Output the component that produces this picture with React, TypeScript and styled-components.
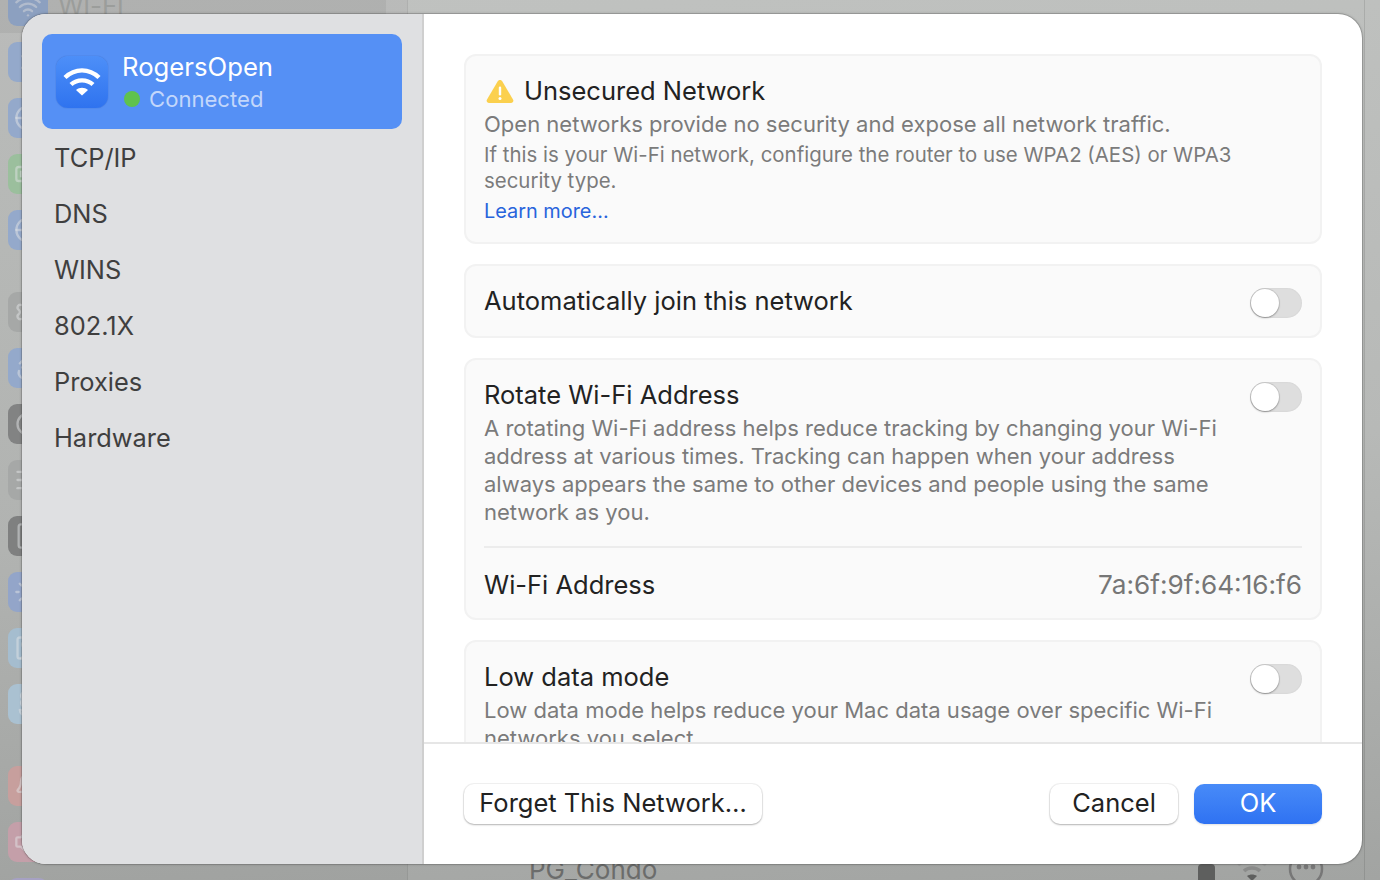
import React from "react";
import styled, { createGlobalStyle } from "styled-components";
import {
  Wifi, Bluetooth, Globe, BatteryFull, Settings, Accessibility, Moon, SlidersHorizontal,
  Tablet, Sun, Image, Flower2, Bell, Volume2, Hand,
} from "lucide-react";

const Global = createGlobalStyle`
  html, body { margin: 0; padding: 0; width: 1380px; height: 880px; overflow: hidden; }
  body { font-family: Inter, "Liberation Sans", sans-serif; -webkit-font-smoothing: antialiased; }
  * { box-sizing: border-box; }
`;

const Page = styled.div`
  position: relative;
  width: 1380px;
  height: 880px;
  overflow: hidden;
  display: grid;
  grid-template-columns: 408px 957px 15px;
  background: linear-gradient(175deg, #c0c2c0 0%, #b7b9b7 55%, #a2a4a2 100%);
`;

const Rail = styled.aside`
  display: flex;
  flex-direction: column;
  gap: 16px;
  padding-left: 8px;
  margin-top: -14px;
  height: 900px;
  border-right: 1px solid rgba(0, 0, 0, 0.06);
  background: rgba(0, 0, 0, 0.03);
`;

const RailIcon = styled.div<{ $bg: string; $gapBefore?: boolean }>`
  flex: none;
  width: 40px;
  height: 40px;
  border-radius: 9px;
  background: ${(p) => p.$bg};
  color: rgba(225, 228, 230, 0.5);
  display: flex;
  align-items: center;
  justify-content: center;
  margin-top: ${(p) => (p.$gapBefore ? "26px" : "0")};
`;

const BackMain = styled.main`
  display: flex;
  flex-direction: column;
  justify-content: flex-end;
  border-right: 1px solid rgba(0, 0, 0, 0.1);
`;

const BackRow = styled.div`
  display: flex;
  align-items: center;
  height: 40px;
  margin-bottom: -3px;
  padding-left: 121px;
  color: #6b6c6b;
  font-size: 26px;
`;

const BackName = styled.span`
  flex: 1;
`;

const BackIcons = styled.div`
  display: flex;
  align-items: center;
  width: 128px;
  margin-right: 38px;
`;

const BackWifiRow = styled.div`
  position: absolute;
  left: 0;
  top: -20px;
  width: 386px;
  height: 53px;
  border-radius: 0 10px 10px 0;
  background: rgba(0, 0, 0, 0.05);
  padding: 10px 0 0 58px;
  font-size: 26px;
  line-height: 32px;
  color: #9b9d9b;
`;

const Dialog = styled.div`
  position: absolute;
  left: 22px;
  top: 14px;
  width: 1340px;
  height: 850px;
  border-radius: 24px;
  overflow: hidden;
  display: grid;
  grid-template-columns: 402px 1fr;
  background: #fff;
  box-shadow: 0 0 0 1px rgba(70, 70, 70, 0.2), 0 0 3px rgba(0, 0, 0, 0.3);
`;

const Side = styled.nav`
  background: #dfe0e2;
  border-right: 2px solid #cfcfcf;
  padding: 20px 20px 0;
  display: flex;
  flex-direction: column;
`;

const Selected = styled.div`
  height: 95px;
  border-radius: 10px;
  background: #5590f5;
  display: flex;
  align-items: center;
  gap: 14px;
  padding-left: 14px;
  margin-bottom: 1px;
`;

const WifiTile = styled.div`
  width: 52px;
  height: 52px;
  border-radius: 12px;
  background: linear-gradient(180deg, #4d8ff8 0%, #2f73ef 100%);
  box-shadow: 0 0 1px rgba(20, 50, 120, 0.5);
  display: flex;
`;

const SelText = styled.div`
  display: flex;
  flex-direction: column;
  margin-top: 1px;
`;

const SelName = styled.div`
  color: #fff;
  font-size: 25.7px;
  line-height: 32px;
  margin-bottom: 1px;
`;

const SelStatus = styled.div`
  display: flex;
  align-items: center;
  gap: 9px;
  color: #c3d7fb;
  font-size: 22.1px;
  line-height: 30px;
  margin-left: 2px;
`;

const Dot = styled.span`
  width: 16px;
  height: 16px;
  border-radius: 50%;
  background: #5fc24e;
`;

const SideItem = styled.div`
  height: 56px;
  line-height: 56px;
  padding-left: 12px;
  color: #3f3f3f;
  font-size: 25.4px;
`;

const Right = styled.section`
  display: flex;
  flex-direction: column;
  min-height: 0;
`;

const Scroll = styled.div`
  height: 730px;
  overflow: hidden;
  padding: 40px 40px 0;
  display: flex;
  flex-direction: column;
  gap: 20px;
  border-bottom: 2px solid #e6e6e6;
`;

const Card = styled.div<{ $h: number; $flat?: boolean }>`
  flex: none;
  height: ${(p) => p.$h}px;
  background: #fafafa;
  border: 2px solid #f2f2f2;
  border-radius: 12px;
  padding: ${(p) => (p.$flat ? "0 18px" : "17px 18px 0")};
`;

const WarnHead = styled.div`
  display: flex;
  align-items: center;
  gap: 10px;
  height: 36px;
  margin-bottom: 1px;
  padding-left: 2px;
`;

const Title = styled.div`
  color: #222;
  font-size: 25.5px;
  line-height: 36px;
`;

const RowTitle = styled(Title)`
  margin-bottom: 1px;
`;

const Desc = styled.div`
  color: #7b7b7b;
  font-size: 22.03px;
  line-height: 28px;
`;

const Small = styled.div`
  color: #7b7b7b;
  font-size: 20.42px;
  line-height: 26px;
  margin-top: 4px;
`;

const Link = styled.div`
  color: #2864dc;
  font-size: 19.9px;
  line-height: 26px;
  margin-top: 4px;
`;

const Row = styled.div<{ $h?: number }>`
  display: flex;
  justify-content: space-between;
  align-items: ${(p) => (p.$h ? "center" : "flex-start")};
  ${(p) => (p.$h ? `height: ${p.$h}px;` : "")}
`;

const RowText = styled.div`
  width: 746px;
`;

const Toggle = styled.div<{ $top?: number }>`
  flex: none;
  width: 52px;
  height: 30px;
  border-radius: 15px;
  background: #dedede;
  box-shadow: inset 0 0 2px rgba(0, 0, 0, 0.08);
  margin-top: ${(p) => p.$top ?? 0}px;
  padding: 1px;
`;

const Knob = styled.div`
  width: 28px;
  height: 28px;
  border-radius: 50%;
  background: #fff;
  box-shadow: 0 0 0 1px rgba(0, 0, 0, 0.08), 0 1px 2px rgba(0, 0, 0, 0.3);
`;

const Divider = styled.div`
  height: 2px;
  background: #ececec;
  margin-top: 20px;
`;

const AddressRow = styled.div`
  display: flex;
  justify-content: space-between;
  align-items: center;
  height: 74px;
`;

const AddressValue = styled.span`
  color: #767676;
  font-size: 26.2px;
  margin-top: -1px;
`;

const Footer = styled.footer`
  flex: 1;
  display: flex;
  align-items: flex-start;
  padding: 40px 40px 0;
  gap: 16px;
`;

const Button = styled.button<{ $w: number; $primary?: boolean }>`
  width: ${(p) => p.$w}px;
  height: 40px;
  border: none;
  padding: 0 0 2px;
  border-radius: 10px;
  font-family: inherit;
  font-size: 25.5px;
  line-height: 38px;
  color: ${(p) => (p.$primary ? "#fff" : "#222")};
  background: ${(p) => (p.$primary ? "linear-gradient(180deg, #488bf8 0%, #2f72f2 100%)" : "#fff")};
  box-shadow: ${(p) =>
    p.$primary
      ? "0 1px 2px rgba(0,0,0,.12)"
      : "0 0 0 1px rgba(0,0,0,.05), 0 1px 2px rgba(0,0,0,.26)"};
`;

const Spacer = styled.div`
  flex: 1;
`;

const railIcons: { I: React.ElementType; bg: string; gap?: boolean }[] = [
  { I: Wifi, bg: "#94a9cb" },
  { I: Bluetooth, bg: "#94a9cb" },
  { I: Globe, bg: "#94a9cb" },
  { I: BatteryFull, bg: "#9bbf9d" },
  { I: Globe, bg: "#94a9cb" },
  { I: Settings, bg: "#a6a8a7", gap: true },
  { I: Accessibility, bg: "#94a9cb" },
  { I: Moon, bg: "#828383" },
  { I: SlidersHorizontal, bg: "#a6a8a7" },
  { I: Tablet, bg: "#7f8080" },
  { I: Sun, bg: "#93a5c9" },
  { I: Image, bg: "#a5bdcf" },
  { I: Flower2, bg: "#aac1d1" },
  { I: Bell, bg: "#c79f9d", gap: true },
  { I: Volume2, bg: "#c49fa9" },
  { I: Hand, bg: "#a6a1c3" },
];

const WifiGlyph = () => (
  <svg width="52" height="52" viewBox="0 0 52 52" fill="none">
    <path d="M9 21.5C19 12 33 12 43 21.5" stroke="#fff" strokeWidth="4.4" />
    <path d="M15 28.5C21 23 31 23 37 28.5" stroke="#fff" strokeWidth="4.4" />
    <path d="M20 34C23.5 31 28.5 31 32 34L26 39.5Z" fill="#fff" />
  </svg>
);

const WarnIcon = () => (
  <svg width="28" height="24" viewBox="0 0 28 24">
    <path
      d="M14 1C15 1 15.8 1.5 16.4 2.5L27 20.5C28 22.2 26.9 24 25 24H3C1.1 24 0 22.2 1 20.5L11.6 2.5C12.2 1.5 13 1 14 1Z"
      fill="#fbd04e"
    />
    <rect x="12.8" y="7.5" width="2.4" height="9" rx="1.2" fill="#fff" />
    <circle cx="14" cy="19.5" r="1.5" fill="#fff" />
  </svg>
);

const BackStatusIcons = () => (
  <svg width="128" height="44" viewBox="0 0 128 44" fill="none">
    <rect x="0" y="17" width="17" height="24" rx="4" fill="#5e5f5e" />
    <path d="M40 18C48 11 60 11 68 18" stroke="#999a99" strokeWidth="3.5" />
    <path d="M46 24C50 20 58 20 62 24" stroke="#8a8b8a" strokeWidth="3.5" />
    <path d="M49 29C52 27 56 27 59 29L54 34Z" fill="#5e5f5e" />
    <circle cx="108" cy="22" r="16" stroke="#777" strokeWidth="2.5" />
    <circle cx="101" cy="20" r="2.4" fill="#777" />
    <circle cx="108" cy="20" r="2.4" fill="#777" />
    <circle cx="115" cy="20" r="2.4" fill="#777" />
  </svg>
);

const App = () => (
  <Page>
    <Global />
    <BackWifiRow>Wi-Fi</BackWifiRow>
    <Rail>
      {railIcons.map(({ I, bg, gap }, i) => (
        <RailIcon key={i} $bg={bg} $gapBefore={gap}>
          <I size={28} strokeWidth={2} />
        </RailIcon>
      ))}
    </Rail>
    <BackMain>
      <BackRow>
        <BackName>PG_Condo</BackName>
        <BackIcons>
          <BackStatusIcons />
        </BackIcons>
      </BackRow>
    </BackMain>
    <div />
    <Dialog>
      <Side>
        <Selected>
          <WifiTile>
            <WifiGlyph />
          </WifiTile>
          <SelText>
            <SelName>RogersOpen</SelName>
            <SelStatus>
              <Dot />
              Connected
            </SelStatus>
          </SelText>
        </Selected>
        {["TCP/IP", "DNS", "WINS", "802.1X", "Proxies", "Hardware"].map((t) => (
          <SideItem key={t}>{t}</SideItem>
        ))}
      </Side>
      <Right>
        <Scroll>
          <Card $h={190}>
            <WarnHead>
              <WarnIcon />
              <Title>Unsecured Network</Title>
            </WarnHead>
            <Desc>Open networks provide no security and expose all network traffic.</Desc>
            <Small>If this is your Wi-Fi network, configure the router to use WPA2 (AES) or WPA3 security type.</Small>
            <Link>Learn more…</Link>
          </Card>
          <Card $h={74} $flat>
            <Row $h={70}>
              <Title>Automatically join this network</Title>
              <Toggle $top={4}>
                <Knob />
              </Toggle>
            </Row>
          </Card>
          <Card $h={262}>
            <Row>
              <RowText>
                <RowTitle>Rotate Wi-Fi Address</RowTitle>
                <Desc>
                  A rotating Wi-Fi address helps reduce tracking by changing your Wi-Fi address at various times. Tracking can happen when your address always appears the same to other devices and people using the same network as you.
                </Desc>
              </RowText>
              <Toggle $top={5}>
                <Knob />
              </Toggle>
            </Row>
            <Divider />
            <AddressRow>
              <Title>Wi-Fi Address</Title>
              <AddressValue>7a:6f:9f:64:16:f6</AddressValue>
            </AddressRow>
          </Card>
          <Card $h={180}>
            <Row>
              <RowText>
                <RowTitle>Low data mode</RowTitle>
                <Desc>Low data mode helps reduce your Mac data usage over specific Wi-Fi networks you select.</Desc>
              </RowText>
              <Toggle $top={5}>
                <Knob />
              </Toggle>
            </Row>
          </Card>
        </Scroll>
        <Footer>
          <Button $w={298}>Forget This Network…</Button>
          <Spacer />
          <Button $w={128}>Cancel</Button>
          <Button $w={128} $primary>OK</Button>
        </Footer>
      </Right>
    </Dialog>
  </Page>
);

export default App;
